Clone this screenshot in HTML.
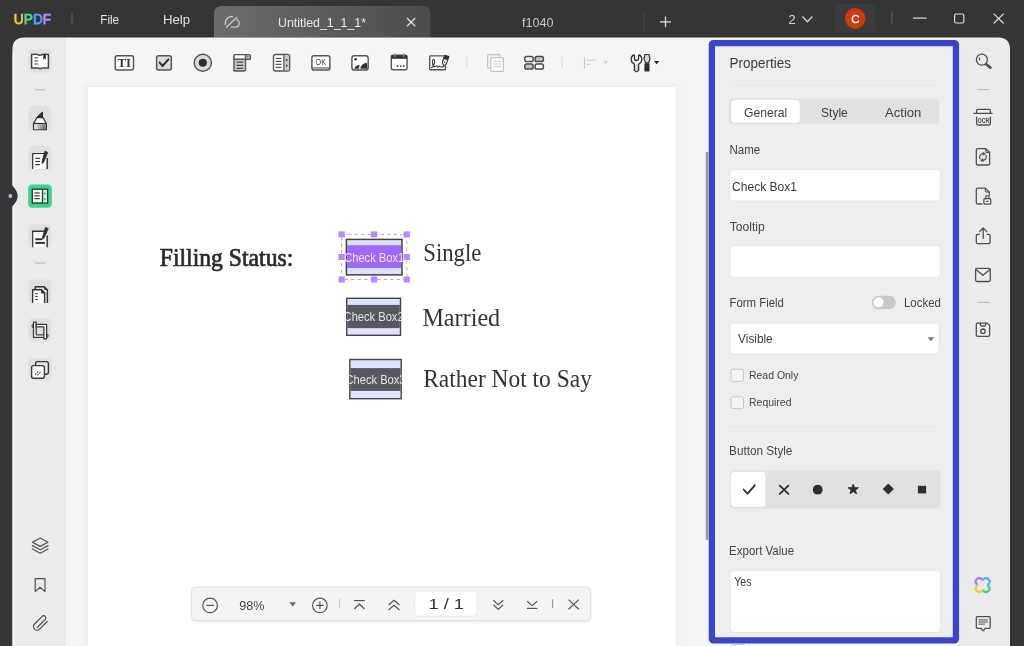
<!DOCTYPE html>
<html><head><meta charset="utf-8">
<style>
html,body{margin:0;padding:0;width:1024px;height:646px;overflow:hidden;background:#353535}
svg{display:block;font-family:"Liberation Sans",sans-serif;will-change:transform}
.serif{font-family:"Liberation Serif",serif}
</style></head><body>
<svg width="1024" height="646" viewBox="0 0 1024 646">
<defs>
 <linearGradient id="tabg" x1="0" x2="1" y1="0" y2="0">
  <stop offset="0" stop-color="#6c6c6c"/><stop offset="0.5" stop-color="#5c5c5c"/><stop offset="1" stop-color="#4c4c4c"/>
 </linearGradient>
 <linearGradient id="hlg" x1="0" x2="1"><stop offset="0" stop-color="#f2f2f2"/><stop offset="0.45" stop-color="#b0b0b0"/><stop offset="1" stop-color="#6a6a6a"/></linearGradient>
 <filter id="pgsh" x="-5%" y="-5%" width="110%" height="110%"><feGaussianBlur stdDeviation="3"/></filter>
 <filter id="barsh" x="-5%" y="-30%" width="110%" height="160%"><feGaussianBlur stdDeviation="1.5"/></filter>
 <clipPath id="cb2"><rect x="346" y="297.6" width="55.2" height="38.4"/></clipPath>
 <clipPath id="cb3"><rect x="349.1" y="358.8" width="52.8" height="40.6"/></clipPath>
</defs>
<!-- title bar -->
<rect x="0" y="0" width="1024" height="646" fill="#353535"/>
<text x="13.8" y="23.75" font-size="14.25" stroke-width="0.75" textLength="37.4" lengthAdjust="spacingAndGlyphs"><tspan fill="#f3c744" stroke="#f3c744">U</tspan><tspan fill="#55d38f" stroke="#55d38f">P</tspan><tspan fill="#4fa6f3" stroke="#4fa6f3">D</tspan><tspan fill="#bf86f2" stroke="#bf86f2">F</tspan></text>
<line x1="72" y1="12" x2="72" y2="24" stroke="#5e5e5e" stroke-width="1"/>
<text x="100.2" y="23.75" font-size="13.5" fill="#e4e4e4" textLength="19" lengthAdjust="spacingAndGlyphs">File</text>
<text x="163" y="23.75" font-size="13.5" fill="#e4e4e4" textLength="27" lengthAdjust="spacingAndGlyphs">Help</text>
<path d="M214,37.5 V14 Q214,6 222,6 H422.5 Q430.5,6 430.5,14 V37.5 Z" fill="url(#tabg)"/>
<g stroke="#c4c4c4" stroke-width="1.4" fill="none" stroke-linecap="round">
 <path d="M225.4,24.4 Q224.8,19.6 228.4,17.3 Q230.4,16.2 232.6,16.6"/>
 <path d="M231.4,27.1 H235.4 Q239.3,26.8 239.2,23 Q239,20.5 236.9,19.6"/>
 <line x1="226.6" y1="27" x2="236.8" y2="17.3"/>
</g>
<text x="278" y="27" font-size="13.5" fill="#e8e8e8" textLength="88" lengthAdjust="spacingAndGlyphs">Untitled_1_1_1*</text>
<g stroke="#dcdcdc" stroke-width="1.3"><line x1="407" y1="18" x2="415.2" y2="26.2"/><line x1="415.2" y1="18" x2="407" y2="26.2"/></g>
<text x="522" y="26.8" font-size="13.5" fill="#c6c6c6" textLength="31.5" lengthAdjust="spacingAndGlyphs">f1040</text>
<line x1="643.8" y1="11" x2="643.8" y2="31.5" stroke="#474747" stroke-width="1"/>
<g stroke="#dddddd" stroke-width="1.3"><line x1="660" y1="21.9" x2="671" y2="21.9"/><line x1="665.5" y1="16.5" x2="665.5" y2="27.2"/></g>
<text x="788.2" y="23.75" font-size="13.5" fill="#d2d2d2">2</text>
<polyline points="802.4,16.5 807.4,21.8 812.4,16.5" fill="none" stroke="#d2d2d2" stroke-width="1.3"/>
<rect x="835" y="3.75" width="40.5" height="28" fill="#3b3b3b"/>
<circle cx="855.2" cy="18.4" r="10.3" fill="#cc3a10"/>
<text x="855.4" y="22.5" font-size="11.5" fill="#ffffff" stroke="#ffffff" stroke-width="0.3" text-anchor="middle">C</text>
<line x1="891.8" y1="12" x2="891.8" y2="24" stroke="#5c5c5c" stroke-width="1.2"/>
<g stroke="#dedede" stroke-width="1.2" fill="none">
 <line x1="913" y1="18.1" x2="926.6" y2="18.1"/>
 <rect x="954.6" y="14" width="9.2" height="9" rx="1.5"/>
 <line x1="993.6" y1="13.6" x2="1003.7" y2="23.5"/><line x1="1003.7" y1="13.6" x2="993.6" y2="23.5"/>
</g>

<!-- main window -->
<path d="M12.4,646 V49.5 Q12.4,37.5 24.4,37.5 H66 V646 Z" fill="#ebebeb"/>
<rect x="12.6" y="52" width="2" height="594" fill="#f1f1f1"/>
<rect x="66" y="37.5" width="893" height="608.5" fill="#f6f6f6"/>
<path d="M959,37.5 H998 Q1010,37.5 1010,49.5 V646 H959 Z" fill="#ebebeb"/>
<!-- left bump -->
<path d="M11,183 C13,188 17.6,189.5 17.6,196 C17.6,202.5 13,204 11,209 Z" fill="#353535"/>
<circle cx="10.3" cy="196" r="2" fill="#bfaaf0"/>


<!-- left sidebar icons -->
<g fill="#e0e0e0">
 <rect x="28.5" y="49.3" width="22.8" height="23.2" rx="4"/>
 <rect x="28.5" y="106" width="22.8" height="23.8" rx="4"/>
 <rect x="28.5" y="145.7" width="22.8" height="24" rx="4"/>
 <rect x="28.5" y="224.4" width="22.8" height="23.4" rx="4"/>
 <rect x="28.5" y="279.5" width="22.8" height="23.5" rx="4"/>
 <rect x="28.5" y="318.5" width="22.8" height="23" rx="4"/>
 <rect x="28.5" y="358.3" width="22.8" height="22.2" rx="4"/>
</g>
<g stroke="#b4b4b4" stroke-width="1"><line x1="35" y1="89.8" x2="45.5" y2="89.8"/><line x1="35" y1="263" x2="45.5" y2="263"/></g>
<!-- book -->
<g stroke="#444" stroke-width="1.5" fill="#fff" stroke-linejoin="round">
 <path d="M31.6,54.5 Q36,53.8 40,55.2 Q44,53.8 48.4,54.5 V68 H41.5 L40,69 L38.5,68 H31.6 Z"/>
</g>
<g stroke="#555" stroke-width="1.1"><line x1="34.3" y1="57.8" x2="38.3" y2="57.8"/><line x1="34.3" y1="60.9" x2="38.3" y2="60.9"/><line x1="34.3" y1="64" x2="38.3" y2="64"/></g>
<path d="M43.3,54.2 H45.9 V59.8 L44.6,58.6 L43.3,59.8 Z" fill="#333"/>
<!-- highlighter -->
<path d="M37.5,116.5 L42.5,112 V117.5 Z" fill="#2e2e2e" stroke="#2e2e2e" stroke-width="1" stroke-linejoin="round"/>
<path d="M37,117.5 H43 L46.3,123.5 V129.6 H33.6 V123.5 Z" fill="#fff" stroke="#333" stroke-width="1.4" stroke-linejoin="round"/>
<line x1="33.6" y1="123.6" x2="46.3" y2="123.6" stroke="#333" stroke-width="1.4"/>
<rect x="34.4" y="124.4" width="11.2" height="5" fill="url(#hlg)"/>
<!-- edit -->
<path d="M32.8,169 V153.6 H45.5 M47.2,158 V169" fill="none" stroke="#333" stroke-width="1.4"/>
<rect x="33.5" y="154.3" width="12.5" height="14.7" fill="#fff"/>
<g stroke="#3a3a3a" stroke-width="1.2"><line x1="35.3" y1="158.4" x2="40" y2="158.4"/><line x1="35.3" y1="161.5" x2="40" y2="161.5"/><line x1="35.3" y1="164.6" x2="40" y2="164.6"/></g>
<path d="M44.9,151.2 L47.7,152.4 L43.8,161.9 L42.2,163.7 L42.1,161.2 Z" fill="#2e2e2e" stroke="#2e2e2e" stroke-width="0.8" stroke-linejoin="round"/>
<!-- form (active) -->
<rect x="28.1" y="184.6" width="23.7" height="23.2" rx="4.2" fill="#40d292"/>
<rect x="32.3" y="189.2" width="15.3" height="13.8" fill="#fff" stroke="#17452f" stroke-width="1.4"/>
<rect x="42.5" y="189.9" width="4.4" height="12.4" fill="#c8efd9"/>
<line x1="42.5" y1="189.2" x2="42.5" y2="203" stroke="#17452f" stroke-width="1.3"/>
<g stroke="#3b3b3b" stroke-width="1.2"><line x1="34.3" y1="193" x2="39.8" y2="193"/><line x1="34.3" y1="195.8" x2="39.8" y2="195.8"/><line x1="34.3" y1="198.6" x2="39.8" y2="198.6"/></g>
<g fill="#2f6f4f"><circle cx="44.8" cy="193.6" r="0.8"/><circle cx="44.8" cy="199" r="0.8"/></g>
<!-- fill sign -->
<path d="M32.8,247.3 V231.3 H44.5 M47.2,235.5 V247.3" fill="none" stroke="#333" stroke-width="1.4"/>
<rect x="33.5" y="232" width="12.5" height="15.3" fill="#fff"/>
<rect x="35.3" y="238.3" width="6.7" height="1.9" fill="#2f2f2f"/>
<rect x="35.3" y="241.9" width="9.6" height="2" fill="#2f2f2f"/>
<path d="M45.4,227.4 L48.2,228.6 L44.3,237.7 L42.7,239.5 L42.6,237 Z" fill="#2e2e2e" stroke="#2e2e2e" stroke-width="0.8" stroke-linejoin="round"/>
<!-- organize -->
<path d="M35.3,289.5 V286.7 H44.3 L47.4,290 V303" fill="none" stroke="#333" stroke-width="1.4" stroke-linejoin="round"/>
<path d="M44.3,286.7 V290 H47.4 Z" fill="#333"/>
<path d="M32.6,303 V289.7 H41.5 L44.6,293 V303" fill="#fff" stroke="#333" stroke-width="1.4" stroke-linejoin="round"/>
<path d="M41.5,289.7 V293 H44.6 Z" fill="#333" stroke="#333" stroke-width="1"/>
<g stroke="#3a3a3a" stroke-width="1.1"><line x1="35.3" y1="293.6" x2="37.8" y2="293.6"/><line x1="35.3" y1="296.5" x2="37.8" y2="296.5"/><line x1="35.3" y1="299.5" x2="37.8" y2="299.5"/></g>
<!-- crop -->
<g fill="#fff" stroke="#3a3a3a" stroke-width="1.3" stroke-linejoin="round">
 <path d="M33.5,322.2 H36.2 V334.8 H46 V337.4 H33.5 Z"/>
 <path d="M36.2,324.3 H46.6 V338.8 H43.9 V326.9 H36.2 Z"/>
</g>
<g fill="none" stroke="#3a3a3a" stroke-width="1.1"><path d="M33.5,324.5 A1.5,1.5 0 0 0 33.5,327.5"/><path d="M46.6,334.2 A1.5,1.5 0 0 1 46.6,337.2"/></g>
<!-- compress -->
<rect x="35.6" y="361.6" width="12.8" height="12.6" rx="2" fill="#e6e6e6" stroke="#3a3a3a" stroke-width="1.4"/>
<rect x="31.6" y="365.6" width="12.8" height="12.6" rx="2" fill="#fff" stroke="#3a3a3a" stroke-width="1.4"/>
<g stroke="#3a3a3a" stroke-width="1.1" stroke-dasharray="1.6 1"><line x1="35.2" y1="374.5" x2="39" y2="370.7"/><line x1="37.4" y1="375.3" x2="41.4" y2="371.3"/></g>
<!-- layers / bookmark / clip -->
<g fill="none" stroke="#505050" stroke-width="1.2" stroke-linejoin="round" stroke-linecap="round">
 <path d="M40.2,538 L48,542.2 L40.2,546.4 L32.4,542.2 Z"/>
 <path d="M32.4,545.6 L40.2,549.8 L48,545.6"/>
 <path d="M32.4,549 L40.2,553.2 L48,549"/>
 <path d="M35.2,578.6 H45 V591.6 L40.1,587.3 L35.2,591.6 Z"/>
 <path d="M37.2,627.5 L45.3,619.4 A2.2,2.2 0 0 0 42.2,616.3 L34.5,624 A3.6,3.6 0 0 0 39.6,629.1 L47.2,621.5"/>
</g>


<!-- toolbar -->
<g stroke="#555" stroke-width="1.5" stroke-linejoin="round">
 <rect x="115.2" y="55.8" width="18.3" height="14.2" rx="2" fill="#fff"/>
 <rect x="156.6" y="55.8" width="14.7" height="14.2" rx="2" fill="#dcdcdc"/>
 <circle cx="202.8" cy="62.75" r="8.6" fill="#dcdcdc"/>
</g>
<text x="117.6" y="67" font-family="Liberation Serif" font-weight="bold" font-size="11.5" fill="#333" textLength="13.5" lengthAdjust="spacingAndGlyphs">TI</text>
<polyline points="159.7,62.6 162.6,66 168.4,59.4" fill="none" stroke="#2e2e2e" stroke-width="2" stroke-linecap="round" stroke-linejoin="round"/>
<circle cx="202.8" cy="62.75" r="4.1" fill="#2e2e2e"/>
<!-- combo -->
<g stroke="#555" stroke-width="1.4" stroke-linejoin="round">
 <path d="M234,71 V56 Q234,54.6 235.4,54.6 H249 Q250.4,54.6 250.4,56 V58.4 Q250.4,59.2 249.6,59.2 H245.5 V69.6 Q245.5,71 244.1,71 H235.4 Q234,71 234,69.6 Z" fill="#c9c9c9"/>
 <path d="M234,59.2 V56 Q234,54.6 235.4,54.6 H245.5 V59.2 Z" fill="#fff"/>
</g>
<path d="M246.9,56.2 H248.8 L247.85,57.6 Z" fill="#444"/>
<g stroke="#3a3a3a" stroke-width="1.1"><line x1="236.5" y1="62.2" x2="243.2" y2="62.2"/><line x1="236.5" y1="65.3" x2="243.2" y2="65.3"/><line x1="236.5" y1="68.3" x2="243.2" y2="68.3"/></g>
<!-- listbox -->
<rect x="273.5" y="54.5" width="16.1" height="16.5" rx="2" fill="#fff" stroke="#555" stroke-width="1.4"/>
<rect x="284.2" y="55.2" width="4.7" height="15.1" fill="#c9c9c9"/>
<line x1="283.9" y1="54.5" x2="283.9" y2="71" stroke="#555" stroke-width="1.3"/>
<g stroke="#3a3a3a" stroke-width="1.1"><line x1="275.8" y1="58.4" x2="281.3" y2="58.4"/><line x1="275.8" y1="61.4" x2="281.3" y2="61.4"/><line x1="275.8" y1="64.3" x2="281.3" y2="64.3"/><line x1="275.8" y1="67.3" x2="281.3" y2="67.3"/></g>
<g fill="#333"><circle cx="286.7" cy="60" r="0.9"/><circle cx="286.7" cy="65.5" r="0.9"/></g>
<!-- OK -->
<rect x="311.9" y="55.7" width="18" height="14.3" rx="2" fill="#fff" stroke="#555" stroke-width="1.4"/>
<line x1="312" y1="68" x2="329.8" y2="68" stroke="#555" stroke-width="1.1"/>
<text x="315.6" y="64.7" font-size="8.2" fill="#333" textLength="10.3" lengthAdjust="spacingAndGlyphs">OK</text>
<!-- image -->
<rect x="351.9" y="55.7" width="16.3" height="14.3" rx="2.5" fill="#fff" stroke="#555" stroke-width="1.4"/>
<circle cx="355.6" cy="59.3" r="1.3" fill="#333"/>
<path d="M354.4,68.8 C354.9,66.2 356.8,65 359.6,64.9 L358.8,68.8 Z" fill="#333"/>
<path d="M360.3,68.8 C360.9,65 363.4,62.9 367.2,62.7 V68.8 Z" fill="#333"/>
<!-- calendar -->
<rect x="391.3" y="55.2" width="15.8" height="14.6" rx="2" fill="#fff" stroke="#555" stroke-width="1.4"/>
<rect x="391.3" y="55.2" width="15.8" height="3.6" fill="#333"/>
<g fill="#888"><rect x="394.2" y="53.6" width="1.6" height="3.6" rx="0.8"/><rect x="402.8" y="53.6" width="1.6" height="3.6" rx="0.8"/></g>
<g fill="#333"><circle cx="397.6" cy="66.1" r="0.95"/><circle cx="400.7" cy="66.1" r="0.95"/><circle cx="403.8" cy="66.1" r="0.95"/></g>
<!-- signature -->
<path d="M443.5,55.9 H430.6 Q429.7,55.9 429.7,56.8 V68.9 Q429.7,69.8 430.6,69.8 H444.6 Q445.5,69.8 445.5,68.9 V66" fill="#fff" stroke="#555" stroke-width="1.4"/>
<path d="M431.6,67.6 Q433.6,66.8 434.3,63.6 Q435,59.3 433.6,59.2 Q432.1,59.4 432.6,63.6 Q433.1,67.6 435.6,66.4 Q436.6,65 437.3,66.6 Q438.1,67.7 439.3,66.2 Q440.6,67.5 443.6,66.6" fill="none" stroke="#3a3a3a" stroke-width="1.1" stroke-linecap="round"/>
<path d="M444.6,55.2 L448.9,56.6 L446.8,62.6 Q446.5,64.5 444.2,66 Q442.3,64 442.4,62 Z" fill="#fff" stroke="#333" stroke-width="1.1" stroke-linejoin="round"/>
<path d="M444.6,55.2 L448.9,56.6 L447.6,60.2 L443.3,58.8 Z" fill="#333"/>
<circle cx="444.6" cy="62.4" r="0.7" fill="#333"/>
<line x1="466.8" y1="57" x2="466.8" y2="68" stroke="#d6d6d6" stroke-width="1"/>
<!-- copy disabled -->
<g stroke="#c4c4c4" stroke-width="1.2" fill="#f4f4f4">
 <rect x="487.6" y="54.6" width="12.2" height="13.5" rx="1"/>
 <rect x="490.8" y="57.6" width="12.6" height="13.8" rx="1" fill="#fbfbfb"/>
</g>
<g stroke="#c8c8c8" stroke-width="0.9"><line x1="493.5" y1="61.3" x2="501" y2="61.3"/><line x1="493.5" y1="64" x2="501" y2="64"/><line x1="493.5" y1="66.7" x2="501" y2="66.7"/></g>
<!-- grid -->
<g stroke="#4a4a4a" stroke-width="1.5">
 <rect x="524.8" y="56.5" width="8.3" height="5" rx="1.8" fill="#fff"/>
 <rect x="535.1" y="56.5" width="8.3" height="5" rx="1.8" fill="#c4c4c4"/>
 <rect x="524.8" y="64" width="8.3" height="5" rx="1.8" fill="#c4c4c4"/>
 <rect x="535.1" y="64" width="8.3" height="5" rx="1.8" fill="#fff"/>
</g>
<line x1="562" y1="57" x2="562" y2="68" stroke="#d6d6d6" stroke-width="1"/>
<!-- align disabled -->
<g stroke="#c8c8c8" stroke-width="1.1"><line x1="584.5" y1="57.5" x2="584.5" y2="68.6"/><line x1="586.5" y1="60.2" x2="595.8" y2="60.2"/><line x1="586.5" y1="64.3" x2="590.5" y2="64.3"/></g>
<path d="M603.4,61.3 H608 L605.7,64 Z" fill="#c8c8c8"/>
<!-- tools -->
<path d="M633.6,54.9 A5.3,5.3 0 0 0 634.4,64.2 V70.2 L636.5,71.8 L638.6,70.2 V64.2 A5.3,5.3 0 0 0 639.4,54.9 L638.6,55.3 V58.4 A2.1,2.1 0 0 1 634.4,58.4 V55.3 Z" fill="#fff" stroke="#333" stroke-width="1.3" stroke-linejoin="round"/>
<path d="M635.1,64.6 H637.9 V70 L636.5,71.1 L635.1,70 Z" fill="#cfcfcf"/>
<path d="M645,54.5 H649 L650,58.6 L648.6,62.9 H645.4 L644,58.6 Z" fill="#d6d6d6" stroke="#333" stroke-width="1.2" stroke-linejoin="round"/>
<rect x="644.4" y="63.2" width="5.1" height="8.3" rx="0.6" fill="#2e2e2e"/>
<path d="M654,61 H659.3 L656.65,64.2 Z" fill="#222"/>

<!-- page -->
<rect x="86" y="85" width="592" height="570" fill="#000" opacity="0.045" filter="url(#pgsh)"/>
<rect x="88" y="87" width="588" height="559" fill="#ffffff"/>


<!-- document content -->
<text x="159.8" y="266.25" font-family="Liberation Serif" font-size="24.6" fill="#2a2a2a" stroke="#2a2a2a" stroke-width="0.7" textLength="133.5" lengthAdjust="spacingAndGlyphs">Filling Status:</text>
<g font-family="Liberation Serif" font-size="25.2" fill="#333">
 <text x="423.3" y="260.8" textLength="58" lengthAdjust="spacingAndGlyphs">Single</text>
 <text x="422.4" y="325.9" textLength="77.8" lengthAdjust="spacingAndGlyphs">Married</text>
 <text x="423.2" y="387.2" textLength="168.7" lengthAdjust="spacingAndGlyphs">Rather Not to Say</text>
</g>
<!-- box1 selected -->
<rect x="346.4" y="239.4" width="55.6" height="35.5" fill="#dde0fb" stroke="#444" stroke-width="1.5"/>
<rect x="347.2" y="245.2" width="54" height="22.8" fill="#9d6bf7"/>
<text x="374.2" y="262" font-size="12" fill="#f3dcfb" text-anchor="middle" textLength="60" lengthAdjust="spacingAndGlyphs">Check Box1</text>
<rect x="341.6" y="234.4" width="65.2" height="45.1" fill="none" stroke="#b8a8d0" stroke-width="1" stroke-dasharray="3.5 3"/>
<g fill="#b88af6">
 <rect x="338.5" y="231.4" width="6.3" height="6"/><rect x="370.9" y="231.4" width="6.3" height="6"/><rect x="403.6" y="231.4" width="6.3" height="6"/>
 <rect x="338.5" y="254" width="6.3" height="6"/><rect x="403.6" y="254" width="6.3" height="6"/>
 <rect x="338.5" y="276.5" width="6.3" height="6"/><rect x="370.9" y="276.5" width="6.3" height="6"/><rect x="403.6" y="276.5" width="6.3" height="6"/>
</g>
<!-- box2 -->
<rect x="346.7" y="298.3" width="53.8" height="37" fill="#dfe2fb" stroke="#444" stroke-width="1.4"/>
<rect x="347.4" y="304.9" width="52.4" height="23.2" fill="#56575f"/>
<g clip-path="url(#cb2)"><text x="373.6" y="321.1" font-size="12" fill="#e4e4e4" text-anchor="middle" textLength="60" lengthAdjust="spacingAndGlyphs">Check Box2</text></g>
<!-- box3 -->
<rect x="349.8" y="359.5" width="51.4" height="39.2" fill="#dfe2fb" stroke="#444" stroke-width="1.4"/>
<rect x="350.5" y="368.1" width="50" height="22.8" fill="#56575f"/>
<g clip-path="url(#cb3)"><text x="375.5" y="383.9" font-size="12" fill="#e4e4e4" text-anchor="middle" textLength="60" lengthAdjust="spacingAndGlyphs">Check Box3</text></g>

<!-- bottom bar -->
<rect x="192" y="588.5" width="398.5" height="33" rx="4" fill="#000" opacity="0.12" filter="url(#barsh)"/>
<rect x="191.5" y="587" width="399" height="33.5" rx="4" fill="#f5f5f5" stroke="#e2e2e2" stroke-width="1"/>
<g fill="none" stroke="#555" stroke-width="1.2">
 <circle cx="210.1" cy="605.4" r="7.3"/><line x1="206.3" y1="605.4" x2="213.9" y2="605.4"/>
 <circle cx="319.9" cy="605.4" r="7.3"/><line x1="316.1" y1="605.4" x2="323.7" y2="605.4"/><line x1="319.9" y1="601.6" x2="319.9" y2="609.2"/>
</g>
<text x="239.2" y="609.8" font-size="13" fill="#444" textLength="25.2" lengthAdjust="spacingAndGlyphs">98%</text>
<path d="M289.4,602.2 H296 L292.7,606.6 Z" fill="#666"/>
<line x1="339.4" y1="598.8" x2="339.4" y2="608" stroke="#c4c4c4" stroke-width="1"/>
<g fill="none" stroke="#555" stroke-width="1.2" stroke-linejoin="round">
 <line x1="354" y1="600.6" x2="364.7" y2="600.6"/><polyline points="354.3,609 359.35,604 364.4,609"/>
 <polyline points="388.6,605 394.05,600.3 399.5,605"/><polyline points="388.6,610 394.05,605.3 399.5,610"/>
 <polyline points="493.3,600.2 498.25,604.6 503.2,600.2"/><polyline points="493.3,604.9 498.25,609.3 503.2,604.9"/>
 <polyline points="527.2,601.2 532.15,605.6 537.1,601.2"/><line x1="526.9" y1="608.4" x2="537.4" y2="608.4"/>
 <line x1="568.5" y1="599.6" x2="578.7" y2="609.3"/><line x1="578.7" y1="599.6" x2="568.5" y2="609.3"/>
</g>
<line x1="552.7" y1="599.3" x2="552.7" y2="608.1" stroke="#888" stroke-width="1"/>
<rect x="414.7" y="591" width="62.5" height="25.2" rx="4" fill="#fff" stroke="#e6e6e6" stroke-width="0.8"/>
<text x="428.5" y="609" font-size="14" fill="#333" textLength="35.5" lengthAdjust="spacingAndGlyphs">1 / 1</text>

<!-- panel -->
<rect x="715" y="46" width="238" height="591.5" fill="#eeeeee"/>
<rect x="711.85" y="43.15" width="244.1" height="597.2" fill="none" stroke="#3c44c9" stroke-width="6.3" rx="1.5"/>
<rect x="705.8" y="152" width="2.8" height="388" fill="#9c9c9c"/>
<path d="M731.5,646 V644.5 H744 V646" fill="none" stroke="#d0d0d0" stroke-width="1"/>

<!-- panel content -->
<text x="729.4" y="67.7" font-size="14" fill="#3a3a3a" textLength="61.5" lengthAdjust="spacingAndGlyphs">Properties</text>
<line x1="729" y1="85.4" x2="940" y2="85.4" stroke="#e8e8e8" stroke-width="1"/>
<rect x="729" y="98.5" width="210.3" height="25.8" rx="4" fill="#e1e1e1"/>
<rect x="731.1" y="99.9" width="68.7" height="22.9" rx="4" fill="#ffffff"/>
<g font-size="13" fill="#404040">
 <text x="744" y="117.2" textLength="43.3" lengthAdjust="spacingAndGlyphs">General</text>
 <text x="821" y="117.2" textLength="26.8" lengthAdjust="spacingAndGlyphs">Style</text>
 <text x="885" y="117.2" textLength="36.4" lengthAdjust="spacingAndGlyphs">Action</text>
</g>
<g font-size="12" fill="#444">
 <text x="729.5" y="153.75" textLength="30.8" lengthAdjust="spacingAndGlyphs">Name</text>
 <text x="729.8" y="230.8" textLength="35" lengthAdjust="spacingAndGlyphs">Tooltip</text>
 <text x="729.5" y="306.7" textLength="54.4" lengthAdjust="spacingAndGlyphs">Form Field</text>
 <text x="904" y="307.4" textLength="36.9" lengthAdjust="spacingAndGlyphs">Locked</text>
 <text x="729.1" y="454.8" textLength="63.3" lengthAdjust="spacingAndGlyphs">Button Style</text>
 <text x="729.1" y="554.7" textLength="65" lengthAdjust="spacingAndGlyphs">Export Value</text>
</g>
<g fill="#ffffff" stroke="#e2e2e2" stroke-width="0.8">
 <rect x="729.6" y="169.5" width="210.8" height="31.5" rx="4"/>
 <rect x="730" y="245.6" width="210.4" height="32.1" rx="4"/>
 <rect x="730" y="323" width="209.1" height="31" rx="4"/>
 <rect x="730.2" y="570.3" width="210.5" height="62.2" rx="4"/>
</g>
<g font-size="12.5" fill="#3a3a3a">
 <text x="732.1" y="190.7" textLength="64.8" lengthAdjust="spacingAndGlyphs">Check Box1</text>
 <text x="738.1" y="343" textLength="34.6" lengthAdjust="spacingAndGlyphs">Visible</text>
</g>
<text x="734.2" y="586.3" font-size="12" fill="#3a3a3a" textLength="17.3" lengthAdjust="spacingAndGlyphs">Yes</text>
<rect x="871.8" y="295.8" width="24" height="13.4" rx="6.7" fill="#c9c9c9"/>
<circle cx="878.6" cy="302.5" r="5" fill="#ffffff"/>
<path d="M927.5,337.3 H934.25 L930.9,341.3 Z" fill="#777"/>
<g fill="#f4f4f4" stroke="#c6c6c6" stroke-width="1">
 <rect x="730.9" y="369.2" width="12.6" height="12.2" rx="2"/>
 <rect x="730.9" y="396.8" width="12.6" height="11.8" rx="2"/>
</g>
<g font-size="11" fill="#444">
 <text x="749" y="378.7" textLength="49.4" lengthAdjust="spacingAndGlyphs">Read Only</text>
 <text x="749" y="406" textLength="42.5" lengthAdjust="spacingAndGlyphs">Required</text>
</g>
<line x1="729" y1="426.9" x2="940" y2="426.9" stroke="#e7e7e7" stroke-width="1"/>
<rect x="730" y="470.2" width="210.7" height="38.2" rx="4" fill="#e1e1e1"/>
<rect x="731" y="471.8" width="34.5" height="34.9" rx="4" fill="#ffffff"/>
<g fill="none" stroke="#2e2e2e" stroke-width="1.8" stroke-linecap="round" stroke-linejoin="round">
 <polyline points="743.6,489.5 747.5,493.6 754.8,485.3"/>
 <line x1="779.8" y1="485.6" x2="788.4" y2="493.8"/><line x1="788.4" y1="485.6" x2="779.8" y2="493.8"/>
</g>
<g fill="#2e2e2e">
 <circle cx="817.7" cy="489.7" r="4.9"/>
 <path d="M853.25,484 L854.6,487.6 L858.5,487.7 L855.5,490.1 L856.5,493.9 L853.25,491.7 L850,493.9 L851,490.1 L848,487.7 L851.9,487.6 Z" stroke="#2e2e2e" stroke-width="0.8" stroke-linejoin="round"/>
 <path d="M888.3,483.4 L893.9,489 L888.3,494.6 L882.7,489 Z"/>
 <rect x="917.9" y="485.8" width="8.2" height="7.6"/>
</g>

<!-- right sidebar icons -->
<g fill="none" stroke="#505050" stroke-width="1.3" stroke-linejoin="round" stroke-linecap="round">
 <circle cx="981.9" cy="59.7" r="5.5"/><line x1="986.3" y1="64.4" x2="990.4" y2="67.6" stroke-width="2.7"/>
 <line x1="979.4" y1="57.9" x2="979.4" y2="60.2" stroke-width="1.1"/>
 <line x1="977.8" y1="89.6" x2="988.2" y2="89.6" stroke="#b4b4b4" stroke-width="1"/>
 <path d="M976.6,113.4 V110.8 Q976.6,109.4 978,109.4 H989 Q990.4,109.4 990.4,110.8 V113.4"/>
 <line x1="973.8" y1="113.4" x2="992" y2="113.4"/>
 <path d="M976.6,117.2 V123.6 Q976.6,125 978,125 H989 Q990.4,125 990.4,123.6 V117.2"/>
 <path d="M977.7,148.7 H985.8 L989.6,152.5 V163.6 Q989.6,165 988.2,165 H977.7 Q976.3,165 976.3,163.6 V150.1 Q976.3,148.7 977.7,148.7 Z"/>
 <path d="M985.8,148.9 V151.2 Q985.8,152.4 987,152.4 H989.4" stroke-width="1.1"/>
 <path d="M983.6,153.75 A3.3,3.3 0 0 0 980.1,158.65" stroke-width="1.2"/>
 <path d="M982.4,160.25 A3.3,3.3 0 0 0 985.9,155.35" stroke-width="1.2"/>
 <path d="M983.3,152.4 L985.5,153.8 L983.3,155.2 Z" fill="#505050" stroke-width="0.6"/>
 <path d="M982.7,158.85 L980.5,160.25 L982.7,161.65 Z" fill="#505050" stroke-width="0.6"/>
 <path d="M982,204 H977.7 Q976.3,204 976.3,202.6 V189.5 Q976.3,188.1 977.7,188.1 H985.3 L989.3,192.1 V195"/>
 <path d="M985.3,188.3 V190.8 Q985.3,192 986.5,192 H989.1" stroke-width="1.1"/>
 <rect x="983.9" y="198.6" width="6.8" height="5.6" rx="0.9"/>
 <path d="M985.6,198.6 V197.3 A1.7,1.7 0 0 1 989,197.3 V198.6"/>
 <line x1="986.6" y1="201.4" x2="988" y2="201.4" stroke-width="1.1"/>
 <path d="M983.2,228.2 V238.4 M979.6,231.6 L983.2,228 L986.8,231.6"/>
 <path d="M979.3,234.3 H977.7 Q976.3,234.3 976.3,235.7 V242.2 Q976.3,243.6 977.7,243.6 H988.7 Q990.1,243.6 990.1,242.2 V235.7 Q990.1,234.3 988.7,234.3 H987.1"/>
 <rect x="975.6" y="268.3" width="14.7" height="13.2" rx="1.4"/>
 <path d="M975.9,269.5 L982.95,275.3 L990,269.5"/>
 <line x1="977.7" y1="302.3" x2="989.3" y2="302.3" stroke="#b4b4b4" stroke-width="1"/>
 <path d="M977.7,323.1 H987.3 L989.6,325.4 V335 Q989.6,336.4 988.2,336.4 H977.7 Q976.3,336.4 976.3,335 V324.5 Q976.3,323.1 977.7,323.1 Z"/>
 <path d="M980.3,323.1 V324.6 Q980.3,326 981.7,326 H984.4 Q985.8,326 985.8,324.6 V323.1"/>
 <circle cx="983" cy="331.2" r="2.2"/>
 <path d="M977.3,616.7 H989.2 Q990.2,616.7 990.2,617.7 V627.3 Q990.2,628.3 989.2,628.3 H985.5 L983.2,630.9 L980.9,628.3 H977.3 Q976.3,628.3 976.3,627.3 V617.7 Q976.3,616.7 977.3,616.7 Z"/>
 <line x1="979" y1="619.9" x2="987.5" y2="619.9" stroke-width="1"/>
 <line x1="979" y1="622" x2="987.5" y2="622" stroke-width="1"/>
 <line x1="979" y1="624.1" x2="984.5" y2="624.1" stroke-width="1"/>
</g>
<text x="977.8" y="123.2" font-size="7.2" font-weight="bold" fill="#444" textLength="11.4" lengthAdjust="spacingAndGlyphs">OCR</text>
<!-- AI logo -->
<g fill="none" stroke-width="2.2">
 <path d="M982.6,580.5 A3.6,3.6 0 1 0 978.1,585.1" stroke="#a97af6"/>
 <path d="M982.6,580.5 A3.6,3.6 0 1 1 987.1,585.1" stroke="#52b4f5"/>
 <path d="M987.1,585.1 A3.6,3.6 0 1 1 982.6,589.7" stroke="#3fd48a"/>
 <path d="M982.6,589.7 A3.6,3.6 0 1 1 978.1,585.1" stroke="#f5c93a"/>
</g>

</svg>
</body></html>
